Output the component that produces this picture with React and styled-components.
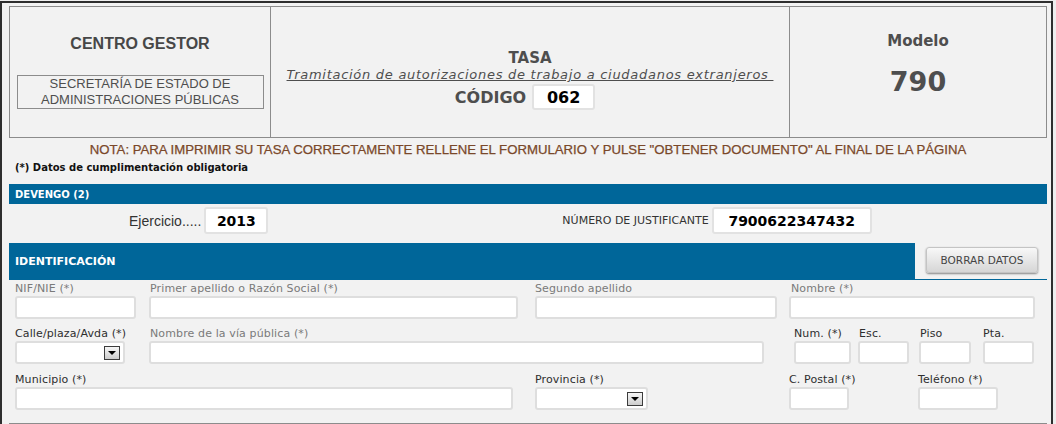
import React from 'react'
import styled, { createGlobalStyle } from 'styled-components'

const verdana = `Verdana, "DejaVu Sans", sans-serif`
const arial = `Arial, "Liberation Sans", sans-serif`

const GlobalStyle = createGlobalStyle`
  html, body {
    margin: 0;
    padding: 0;
    background: #eeeeee;
  }
  body {
    font-family: ${verdana};
  }
`

const Page = styled.div`
  width: 1038px;
  margin-top: 1px;
  padding: 0 4px 0 7px;
  background: #f2f2f2;
  border: 2px solid #2e2e2e;
  border-bottom: none;
  height: 421px;
  box-sizing: content-box;
`

const Header = styled.div`
  display: flex;
  height: 130px;
  margin-top: 3px;
  border: 1px solid #8c8c8c;
`

const Cell = styled.div`
  display: flex;
  flex-direction: column;
  align-items: center;
  width: ${p => p.$w ? `${p.$w}px` : 'auto'};
  flex: ${p => p.$w ? 'none' : 1};
  padding-top: ${p => p.$top}px;
  border-right: ${p => p.$last ? 'none' : '1px solid #8c8c8c'};
  color: #4e4e4e;
`

const Gestor = styled.div`
  font: bold 16px/19px ${arial};
  color: #474747;
`

const GestorBox = styled.div`
  margin-top: 22px;
  width: 245px;
  border: 1px solid #8c8c8c;
  text-align: center;
  font: 13px/16px ${arial};
  color: #4e4e4e;
`

const Tasa = styled.div`
  font: bold 15px/18px ${verdana};
`

const Tramite = styled.div`
  font: italic 13px/16px ${verdana};
  letter-spacing: 0.72px;
  text-decoration: underline;
  white-space: pre;
`

const CodigoRow = styled.div`
  display: flex;
  align-items: center;
  gap: 6px;
  margin-top: 1px;
  margin-right: 10px;
  font: bold 16px ${verdana};
`

const ValueBox = styled.div`
  display: flex;
  align-items: center;
  justify-content: center;
  box-sizing: border-box;
  width: ${p => p.$w}px;
  height: ${p => p.$h || 27}px;
  background: #fff;
  border: 2px solid #e2e2e2;
  border-radius: 3px;
  font: bold ${p => p.$size || 14}px ${verdana};
  color: #000;
`

const Modelo = styled.div`
  font: bold 15px/18px ${verdana};
`

const ModeloNum = styled.div`
  margin-top: 16px;
  font: bold 27px/32px ${verdana};
`

const Nota = styled.div`
  margin-top: 3px;
  text-align: center;
  font: 13.2px/17px ${arial};
  color: #7a482a;
  -webkit-text-stroke: 0.25px #7a482a;
`

const Obligatorio = styled.div`
  margin-top: 3px;
  padding-left: 6px;
  font: bold 10px/14px ${verdana};
  color: #111;
`

const Bar = styled.div`
  display: flex;
  align-items: center;
  height: ${p => p.$h}px;
  margin-top: ${p => p.$mt}px;
  padding-left: 6px;
  background: #006699;
  color: #fff;
  font: bold ${p => p.$size}px ${verdana};
`

const DevengoRow = styled.div`
  display: flex;
  align-items: center;
  margin-top: 3px;
  padding-left: 120px;
`

const Pair = styled.div`
  display: flex;
  align-items: center;
  gap: 3px;
  margin-left: ${p => p.$ml || 0}px;
`

const Ejercicio = styled.span`
  font: 14px ${arial};
  color: #333;
`

const Justificante = styled.span`
  font: 11px ${verdana};
  color: #333;
`

const IdentHeader = styled.div`
  display: flex;
  margin-top: 9px;
  border-bottom: 1px solid #006699;
`

const IdentBar = styled(Bar)`
  flex: 1;
`

const ButtonArea = styled.div`
  width: 132px;
  display: flex;
  align-items: center;
  justify-content: center;
  padding-bottom: 3px;
`

const ClearButton = styled.button`
  width: 112px;
  height: 26px;
  margin-left: 2px;
  border: 1px solid #c4c4c4;
  border-radius: 3px;
  background: linear-gradient(#f8f8f8, #d6d6d6);
  box-shadow: 0 1px 2px rgba(0, 0, 0, 0.45);
  font: 10.5px ${verdana};
  color: #444;
  padding: 0;
`

const Form = styled.div`
  padding: 2px 0 13px 6px;
  border-bottom: 2px solid #8c8c8c;
`

const FieldRow = styled.div`
  display: flex;
  margin-top: ${p => p.$mt || 0}px;
`

const Field = styled.div`
  display: flex;
  flex-direction: column;
  width: ${p => p.$w}px;
  margin-left: ${p => p.$gap || 0}px;
`

const Label = styled.label`
  height: 14px;
  padding-left: ${p => p.$pad || 0}px;
  font: 11px/14px ${verdana};
  letter-spacing: 0.12px;
  color: ${p => p.$dim ? '#7a7a7a' : '#2e2e2e'};
  white-space: nowrap;
`

const Input = styled.div`
  box-sizing: border-box;
  height: 23px;
  background: #fff;
  border: 2px solid #dedede;
  border-radius: 3px;
  display: flex;
  align-items: center;
  justify-content: flex-end;
  padding-right: 3px;
`

const Arrow = styled.span`
  box-sizing: border-box;
  width: 16px;
  height: 14px;
  border: 1px solid #3c3c3c;
  background: linear-gradient(#f6f6f6, #cdcdcd);
  display: flex;
  align-items: center;
  justify-content: center;

  &::after {
    content: '';
    border-left: 4px solid transparent;
    border-right: 4px solid transparent;
    border-top: 4px solid #000;
    margin-top: 1px;
  }
`

const TextField = ({ label, w, gap, dim, pad, select }) => (
  <Field $w={w} $gap={gap}>
    <Label $dim={dim} $pad={pad}>{label}</Label>
    <Input>{select && <Arrow />}</Input>
  </Field>
)

const App = () => {
  return (
    <>
      <GlobalStyle />
      <Page>
        <Header>
          <Cell $w={260} $top={27}>
            <Gestor>CENTRO GESTOR</Gestor>
            <GestorBox>
              SECRETARÍA DE ESTADO DE<br />ADMINISTRACIONES PÚBLICAS
            </GestorBox>
          </Cell>
          <Cell $w={518} $top={42}>
            <Tasa>TASA</Tasa>
            <Tramite>Tramitación de autorizaciones de trabajo a ciudadanos extranjeros </Tramite>
            <CodigoRow>
              CÓDIGO
              <ValueBox $w={63} $h={26} $size={16}>062</ValueBox>
            </CodigoRow>
          </Cell>
          <Cell $top={25} $last>
            <Modelo>Modelo</Modelo>
            <ModeloNum>790</ModeloNum>
          </Cell>
        </Header>

        <Nota>NOTA: PARA IMPRIMIR SU TASA CORRECTAMENTE RELLENE EL FORMULARIO Y PULSE "OBTENER DOCUMENTO" AL FINAL DE LA PÁGINA</Nota>
        <Obligatorio>(*) Datos de cumplimentación obligatoria</Obligatorio>

        <Bar $h={20} $mt={9} $size={10}>DEVENGO (2)</Bar>
        <DevengoRow>
          <Pair>
            <Ejercicio>Ejercicio.....</Ejercicio>
            <ValueBox $w={64}>2013</ValueBox>
          </Pair>
          <Pair $ml={294}>
            <Justificante>NÚMERO DE JUSTIFICANTE</Justificante>
            <ValueBox $w={160}>7900622347432</ValueBox>
          </Pair>
        </DevengoRow>

        <IdentHeader>
          <IdentBar $h={36} $mt={0} $size={11}>IDENTIFICACIÓN</IdentBar>
          <ButtonArea>
            <ClearButton>BORRAR DATOS</ClearButton>
          </ButtonArea>
        </IdentHeader>

        <Form>
          <FieldRow>
            <TextField label="NIF/NIE (*)" w={121} dim />
            <TextField label="Primer apellido o Razón Social (*)" w={369} gap={13} dim pad={1} />
            <TextField label="Segundo apellido" w={242} gap={17} dim />
            <TextField label="Nombre (*)" w={246} gap={12} dim pad={2} />
          </FieldRow>
          <FieldRow $mt={8}>
            <TextField label="Calle/plaza/Avda (*)" w={110} select />
            <TextField label="Nombre de la vía pública (*)" w={615} gap={24} dim pad={1} />
            <TextField label="Num. (*)" w={57} gap={30} />
            <TextField label="Esc." w={51} gap={7} pad={1} />
            <TextField label="Piso" w={52} gap={10} pad={1} />
            <TextField label="Pta." w={51} gap={12} />
          </FieldRow>
          <FieldRow $mt={9}>
            <TextField label="Municipio (*)" w={498} />
            <TextField label="Provincia (*)" w={113} gap={22} select />
            <TextField label="C. Postal (*)" w={60} gap={141} />
            <TextField label="Teléfono (*)" w={80} gap={69} />
          </FieldRow>
        </Form>
      </Page>
    </>
  )
}

export default App
